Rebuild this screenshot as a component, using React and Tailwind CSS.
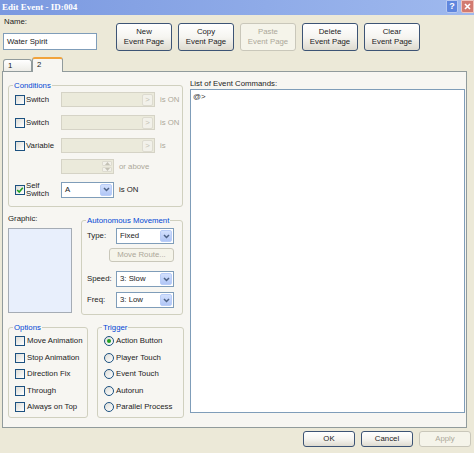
import React from 'react';

// XP-style "Edit Event" dialog

function Check({ checked }) {
  return (
    <span className="w-[10px] h-[10px] shrink-0 border border-[#1c5180] bg-gradient-to-br from-[#dcdcd7] to-white flex items-center justify-center">
      {checked && (
        <svg width="8" height="8" viewBox="0 0 8 8">
          <path d="M1.2 4 L3.2 6 L6.8 1.8" fill="none" stroke="#21a121" strokeWidth="1.6" />
        </svg>
      )}
    </span>
  );
}

function Radio({ on }) {
  return (
    <span className="w-[10px] h-[10px] shrink-0 rounded-full border border-[#1c5180] bg-gradient-to-br from-[#dcdcd7] to-white flex items-center justify-center">
      {on && <span className="w-[4px] h-[4px] rounded-full bg-[#21a121]" />}
    </span>
  );
}

function Chevron() {
  return (
    <svg width="7" height="5" viewBox="0 0 7 5">
      <path d="M1 1 L3.5 3.5 L6 1" fill="none" stroke="#4d6185" strokeWidth="1.5" />
    </svg>
  );
}

function Select({ value, w }) {
  return (
    <div className={`flex h-[16px] ${w} border border-[#7f9db9] bg-white items-center`}>
      <span className="flex-1 pl-[3px] leading-none">{value}</span>
      <span className="w-[12px] h-[12px] mr-[1px] rounded-[2px] border border-[#b9cdf8] bg-gradient-to-b from-[#d3e0fd] to-[#b1c6f6] flex items-center justify-center">
        <Chevron />
      </span>
    </div>
  );
}

function Group({ label, className, children }) {
  return (
    <div className={`relative border border-[#d0d0bf] rounded-[3px] ${className}`}>
      <span className="absolute -top-[5px] left-[4px] px-[1px] leading-[9px] bg-[#f7f6f2] text-[#0046d5]">{label}</span>
      {children}
    </div>
  );
}

function Btn({ lines, disabled, w = 'w-[56px]', h = 'h-[28px]' }) {
  return (
    <div
      className={`${w} ${h} rounded-[3px] border flex flex-col items-center justify-center leading-[10px] ${
        disabled
          ? 'border-[#c9c7ba] bg-[#f5f4ea] text-[#aca899]'
          : 'border-[#3d5475] bg-gradient-to-b from-white via-[#f6f5f1] to-[#dedbd0] text-[#222]'
      }`}
    >
      {lines.map((l) => (
        <span key={l}>{l}</span>
      ))}
    </div>
  );
}

function DisabledPick() {
  return (
    <div className="flex items-center w-[94px] h-[15px] border border-[#d5d3c6] bg-[#ebeadb]">
      <span className="flex-1" />
      <span className="w-[11px] h-[12px] mr-[1px] rounded-[2px] border border-[#dddbd0] bg-[#f2f1ea] flex items-center justify-center text-[#c3c1b4] leading-none">
        &gt;
      </span>
    </div>
  );
}

export default function App() {
  return (
    <div className="w-[474px] h-[453px] overflow-hidden bg-[#ece9d8] flex flex-col font-['Liberation_Sans',Arial,sans-serif] text-[7.8px] text-[#222]">
      {/* title bar */}
      <div className="h-[15px] shrink-0 flex items-start justify-between bg-gradient-to-r from-[#7b99e0] to-[#9fb9ee]">
        <span className="pl-[2px] pt-[2px] font-['Liberation_Serif',serif] font-bold text-[9px] leading-[11px] text-white">
          Edit Event - ID:004
        </span>
        <div className="flex gap-[3px]">
          <span className="w-[12px] h-[13px] rounded-b-[2px] bg-[#5f86de] border border-[#b8c9f0] text-white font-bold text-[9px] leading-[11px] text-center">?</span>
          <span className="w-[13px] h-[13px] rounded-bl-[2px] bg-[#d27a70] border border-[#f0c4bc] flex items-center justify-center">
            <svg width="7" height="7" viewBox="0 0 7 7">
              <path d="M1 1 L6 6 M6 1 L1 6" stroke="white" strokeWidth="1.6" />
            </svg>
          </span>
        </div>
      </div>

      {/* name + page buttons */}
      <div className="h-[42px] shrink-0 flex items-start">
        <div className="ml-[3px] w-[94px] flex flex-col">
          <span className="mt-[2px] h-[9px] leading-[9px] pl-[1px]">Name:</span>
          <div className="mt-[7px] h-[17px] border border-[#7f9db9] bg-white flex items-center pl-[3px]">Water Spirit</div>
        </div>
        <div className="ml-[19px] mt-[8px] flex gap-[6px]">
          <Btn lines={['New', 'Event Page']} />
          <Btn lines={['Copy', 'Event Page']} />
          <Btn lines={['Paste', 'Event Page']} disabled />
          <Btn lines={['Delete', 'Event Page']} />
          <Btn lines={['Clear', 'Event Page']} />
        </div>
      </div>

      {/* tabs */}
      <div className="h-[15px] shrink-0 flex items-end pl-[3px]">
        <div className="w-[29px] h-[13px] border border-b-0 border-[#919b9c] rounded-t-[3px] bg-gradient-to-b from-white to-[#ecebe5] pl-[4px] leading-[12px]">1</div>
        <div className="relative z-10 w-[31px] h-[15px] border-x border-[#919b9c] rounded-t-[3px] bg-[#f7f6f2] border-t-2 border-t-[#f1a33c] pl-[4px] leading-[11px]">2</div>
      </div>

      {/* tab panel */}
      <div className="-mt-[1px] ml-[2px] w-[465px] h-[357px] shrink-0 border border-[#919b9c] bg-[#f7f6f2] flex">
        <div className="ml-[5px] w-[176px] flex flex-col">
          <Group label="Conditions" className="mt-[13px] w-[175px] h-[122px]">
            <div className="flex flex-col pl-[6px]">
              {['Switch', 'Switch', 'Variable'].map((t, i) => (
                <div key={i} className={`flex items-center h-[15px] ${i === 0 ? 'mt-[6px]' : 'mt-[8px]'}`}>
                  <div className="w-[46px] flex items-center gap-[1px]">
                    <Check />
                    <span>{t}</span>
                  </div>
                  <DisabledPick />
                  <span className="ml-[5px] text-[#aca899]">{i === 2 ? 'is' : 'is ON'}</span>
                </div>
              ))}
              <div className="flex items-center h-[15px] mt-[6px]">
                <div className="ml-[46px] w-[53px] h-[15px] border border-[#d5d3c6] bg-[#ebeadb] flex justify-end">
                  <div className="w-[11px] flex flex-col gap-[1px] py-[1px] pr-[1px]">
                    <span className="flex-1 rounded-[1px] bg-[#f2f1ea] border border-[#dddbd0] flex items-center justify-center">
                      <svg width="5" height="3" viewBox="0 0 5 3"><path d="M0 3 L2.5 0 L5 3Z" fill="#c3c1b4" /></svg>
                    </span>
                    <span className="flex-1 rounded-[1px] bg-[#f2f1ea] border border-[#dddbd0] flex items-center justify-center">
                      <svg width="5" height="3" viewBox="0 0 5 3"><path d="M0 0 L2.5 3 L5 0Z" fill="#c3c1b4" /></svg>
                    </span>
                  </div>
                </div>
                <span className="ml-[5px] text-[#aca899]">or above</span>
              </div>
              <div className="flex items-center h-[15px] mt-[8px]">
                <div className="w-[46px] flex items-center gap-[1px]">
                  <Check checked />
                  <span className="flex flex-col leading-[8px]">
                    <span>Self</span>
                    <span>Switch</span>
                  </span>
                </div>
                <Select value="A" w="w-[53px]" />
                <span className="ml-[5px]">is ON</span>
              </div>
            </div>
          </Group>

          <div className="flex mt-[7px]">
            <div className="w-[64px] flex flex-col">
              <span className="h-[9px] leading-[9px]">Graphic:</span>
              <div className="mt-[5px] h-[85px] border border-[#a5acb5] bg-[#e8effc]" />
            </div>
            <Group label="Autonomous Movement" className="ml-[9px] mt-[6px] w-[102px] h-[95px]">
              <div className="flex flex-col pl-[5px]">
                <div className="flex items-center mt-[7px]">
                  <span className="w-[29px]">Type:</span>
                  <Select value="Fixed" w="w-[58px]" />
                </div>
                <div className="ml-[22px] mt-[4px]">
                  <Btn lines={['Move Route...']} disabled w="w-[65px]" h="h-[14px]" />
                </div>
                <div className="flex items-center mt-[9px]">
                  <span className="w-[29px]">Speed:</span>
                  <Select value="3: Slow" w="w-[58px]" />
                </div>
                <div className="flex items-center mt-[5px]">
                  <span className="w-[29px]">Freq:</span>
                  <Select value="3: Low" w="w-[58px]" />
                </div>
              </div>
            </Group>
          </div>

          <div className="flex mt-[12px]">
            <Group label="Options" className="w-[80px] h-[91px]">
              <div className="flex flex-col pl-[6px] mt-[5px]">
                {['Move Animation', 'Stop Animation', 'Direction Fix', 'Through', 'Always on Top'].map((t) => (
                  <div key={t} className="h-[16.5px] flex items-center gap-[2px]">
                    <Check />
                    <span>{t}</span>
                  </div>
                ))}
              </div>
            </Group>
            <Group label="Trigger" className="ml-[9px] w-[87px] h-[91px]">
              <div className="flex flex-col pl-[6px] mt-[5px]">
                {['Action Button', 'Player Touch', 'Event Touch', 'Autorun', 'Parallel Process'].map((t, i) => (
                  <div key={t} className="h-[16.5px] flex items-center gap-[2px]">
                    <Radio on={i === 0} />
                    <span>{t}</span>
                  </div>
                ))}
              </div>
            </Group>
          </div>
        </div>

        <div className="ml-[6px] w-[275px] flex flex-col">
          <span className="mt-[7px] h-[9px] leading-[9px]">List of Event Commands:</span>
          <div className="mt-[1px] h-[324px] border border-[#7f9db9] bg-white pl-[2px] pt-[2px] leading-[9px] text-[#333]">@&gt;</div>
        </div>
      </div>

      {/* dialog buttons */}
      <div className="mt-[3px] flex justify-end gap-[6px] pr-[3px]">
        <Btn lines={['OK']} w="w-[52px]" h="h-[16px]" />
        <Btn lines={['Cancel']} w="w-[52px]" h="h-[16px]" />
        <Btn lines={['Apply']} disabled w="w-[52px]" h="h-[16px]" />
      </div>
    </div>
  );
}
